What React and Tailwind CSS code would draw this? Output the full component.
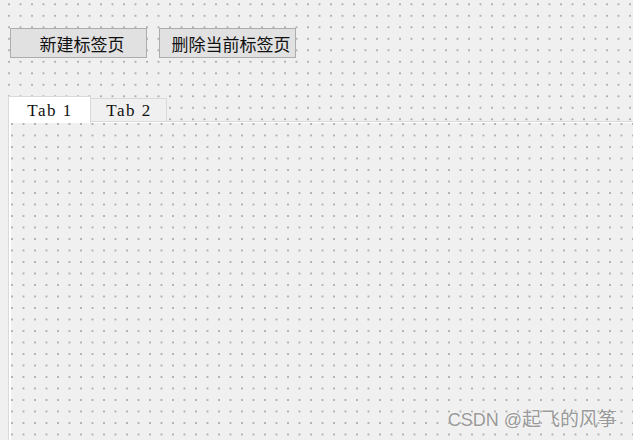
import React from 'react';

const gridDots =
  'bg-[radial-gradient(circle_at_1px_1px,#a9a9a9_0.6px,transparent_1.3px)] bg-size-[11.5px_11.5px]';

function FormButton({ children, width }) {
  return (
    <button
      className={`${width} h-[30px] flex items-center justify-center pl-[7px] border border-[#adadad] bg-[#e1e1e1] text-[17px] leading-none text-[#111] font-['Noto_Sans_CJK_SC',sans-serif]`}
    >
      {children}
    </button>
  );
}

export default function App() {
  return (
    <div className={`relative h-[440px] w-full overflow-hidden flex flex-col bg-[#f0f0f0] ${gridDots} bg-position-[8px_3.3px]`}>
      {/* top buttons */}
      <div className="flex gap-[12px] pl-[10px] pt-[28px]">
        <FormButton width="w-[137px]">新建标签页</FormButton>
        <FormButton width="w-[137px]">删除当前标签页</FormButton>
      </div>

      {/* tab widget */}
      <div className="mt-[38px] flex flex-col flex-1 min-h-0 pl-[8px]">
        <div className="flex items-end h-[25px] relative z-10 font-['Liberation_Serif',serif] text-[17px] tracking-[1.5px] text-[#111]">
          <div className="w-[83px] h-[27px] -mb-[2px] flex items-center justify-center pt-[1px] pl-[1px] bg-white border-l border-t border-r border-[#d9d9d9]">
            Tab 1
          </div>
          <div className="w-[76px] h-[23px] flex items-center justify-center pt-[2px] pl-[1px] bg-[#f0f0f0] border-t border-r border-[#d9d9d9]">
            Tab 2
          </div>
        </div>
        <div className="flex-1 min-h-0 flex flex-col bg-white border-l border-t border-[#d9d9d9] pl-[2px] pt-[1px]">
          <div className={`flex-1 bg-[#f0f0f0] ${gridDots} bg-position-[0px_0px]`} />
        </div>
      </div>

      {/* watermark */}
      <div className="absolute right-[16px] bottom-[6px] flex items-baseline text-[#9a9a9a] [text-shadow:0_0_2px_#fff] font-['Liberation_Sans','Noto_Sans_CJK_SC',sans-serif]">
        <span className="text-[18px]">CSDN @</span>
        <span className="text-[19px] font-['Noto_Sans_CJK_SC',sans-serif]">起飞的风筝</span>
      </div>
    </div>
  );
}
